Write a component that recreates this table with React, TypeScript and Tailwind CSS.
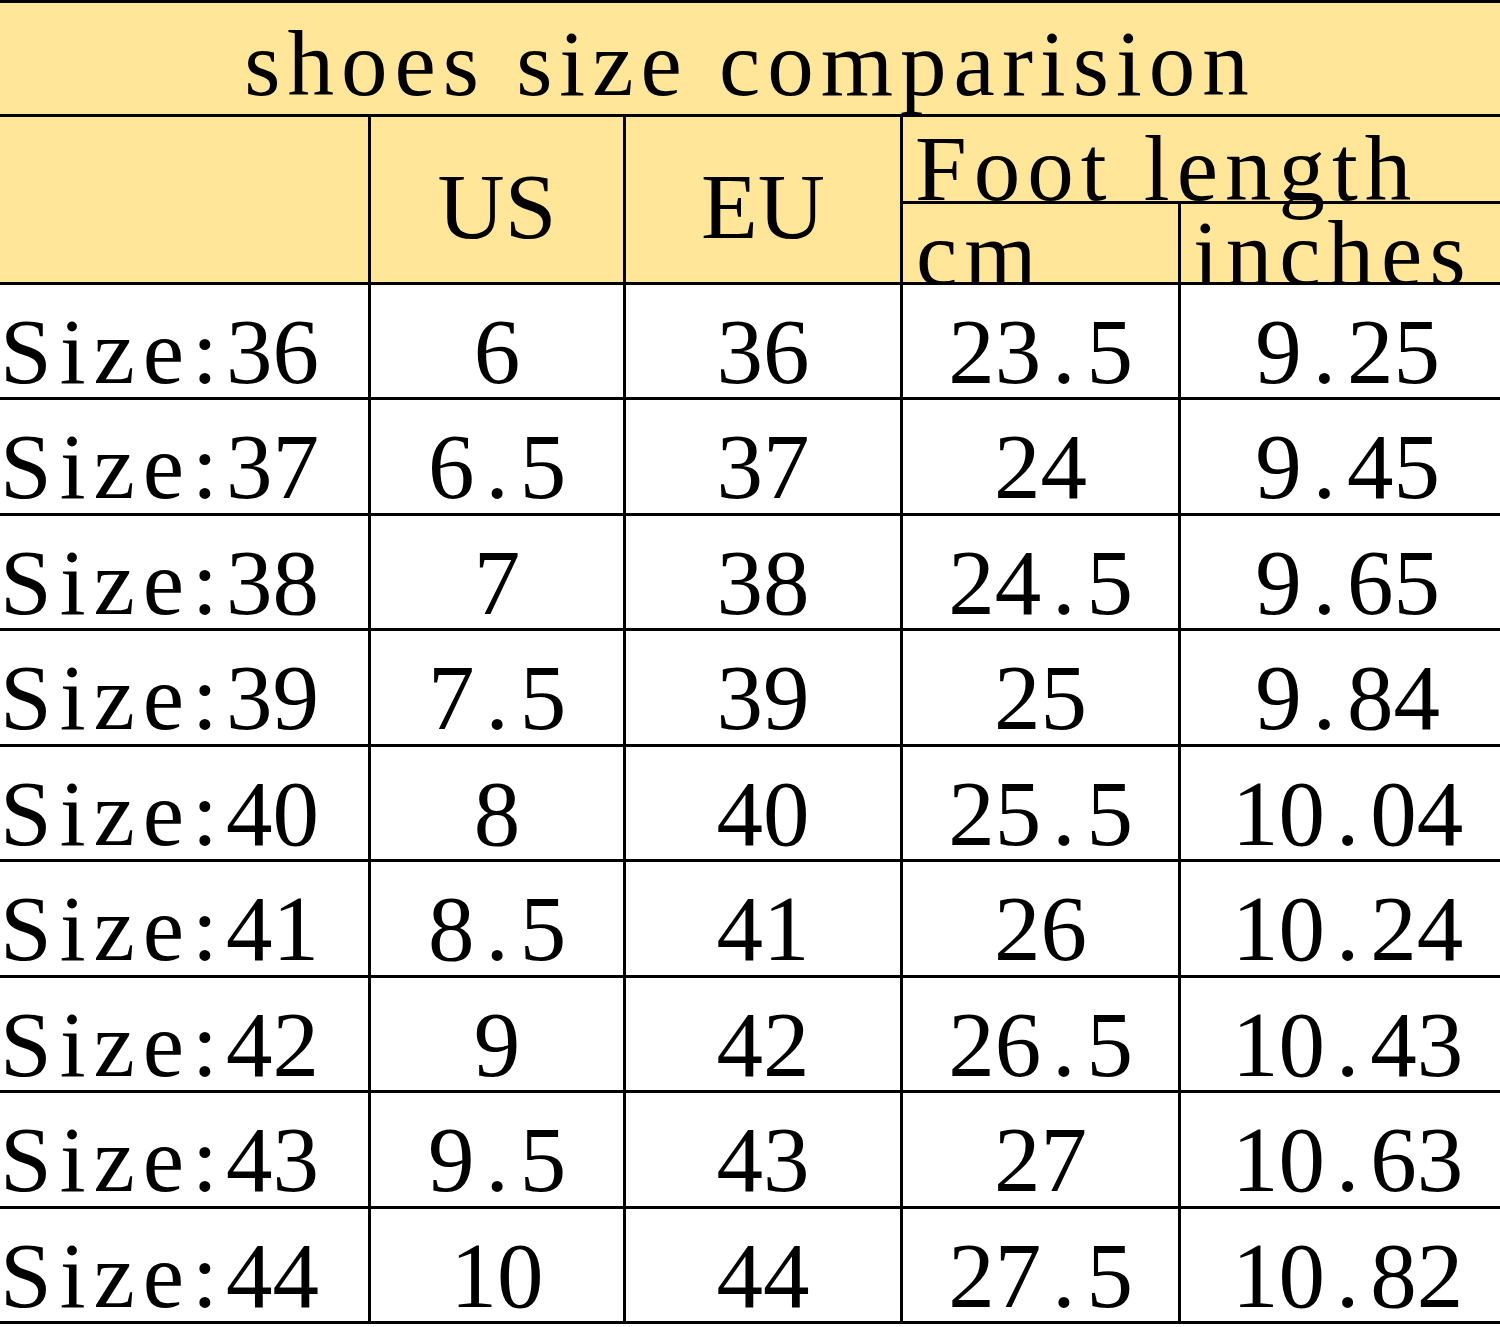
import React from 'react';

interface SizeRow {
    label: string;
    us: string;
    eu: string;
    cm: string;
    inches: string;
}

const rows: SizeRow[] = [
    { label: '36', us: '6', eu: '36', cm: '23.5', inches: '9.25' },
    { label: '37', us: '6.5', eu: '37', cm: '24', inches: '9.45' },
    { label: '38', us: '7', eu: '38', cm: '24.5', inches: '9.65' },
    { label: '39', us: '7.5', eu: '39', cm: '25', inches: '9.84' },
    { label: '40', us: '8', eu: '40', cm: '25.5', inches: '10.04' },
    { label: '41', us: '8.5', eu: '41', cm: '26', inches: '10.24' },
    { label: '42', us: '9', eu: '42', cm: '26.5', inches: '10.43' },
    { label: '43', us: '9.5', eu: '43', cm: '27', inches: '10.63' },
    { label: '44', us: '10', eu: '44', cm: '27.5', inches: '10.82' },
];

// row heights alternate so the grid lines land where the sheet has them
const rowHeights = ['h-[115px]', 'h-[116px]'];

const Num: React.FC<{ value: string }> = ({ value }) => {
    const [whole, frac] = value.split('.');
    return (
        <span>
            {whole}
            {frac !== undefined && (
                <>
                    <span className="mx-[11px]">.</span>
                    {frac}
                </>
            )}
        </span>
    );
};

export default function App() {
    return (
        <div
            className="w-[1500px] h-[1327px] overflow-hidden bg-white text-black text-[93px] leading-none"
            style={{ fontFamily: '"Liberation Serif", "Times New Roman", serif' }}
        >
            <div className="w-[1514px]">
                {/* Title */}
                <div className="w-[1500px] h-[117px] bg-[#FFE699] border-t-[3px] border-b-[3px] border-black text-center pt-[14px] tracking-[7px] whitespace-nowrap">
                    shoes size comparision
                </div>

                {/* Column headers */}
                <div className="flex h-[168px] bg-[#FFE699] border-b-[3px] border-black overflow-hidden">
                    <div className="w-[371px] shrink-0 border-r-[3px] border-black" />
                    <div className="w-[255px] shrink-0 border-r-[3px] border-black text-center pt-[43px]">US</div>
                    <div className="w-[277px] shrink-0 border-r-[3px] border-black text-center pt-[43px]">EU</div>
                    <div className="flex-1 flex flex-col">
                        <div className="h-[87px] border-b-[3px] border-black pl-[12px] pt-[5px] tracking-[7px] whitespace-nowrap">
                            Foot length
                        </div>
                        <div className="flex flex-1">
                            <div className="w-[278px] shrink-0 border-r-[3px] border-black pl-[13px] pt-[3px] tracking-[7px]">
                                cm
                            </div>
                            <div className="flex-1 pl-[12px] pt-[3px] tracking-[7px]">inches</div>
                        </div>
                    </div>
                </div>

                {/* Size rows */}
                {rows.map((r, i) => (
                    <div key={r.label} className={`flex ${rowHeights[i % 2]} border-b-[3px] border-black`}>
                        <div className="w-[371px] shrink-0 border-r-[3px] border-black pl-[0px] pt-[20px] whitespace-nowrap">
                            <span className="tracking-[8px]">Size:</span>
                            {r.label}
                        </div>
                        <div className="w-[255px] shrink-0 border-r-[3px] border-black text-center pt-[20px]">
                            <Num value={r.us} />
                        </div>
                        <div className="w-[277px] shrink-0 border-r-[3px] border-black text-center pt-[20px]">
                            <Num value={r.eu} />
                        </div>
                        <div className="w-[278px] shrink-0 border-r-[3px] border-black text-center pt-[20px]">
                            <Num value={r.cm} />
                        </div>
                        <div className="flex-1 text-center pt-[20px]">
                            <Num value={r.inches} />
                        </div>
                    </div>
                ))}
            </div>
        </div>
    );
}
